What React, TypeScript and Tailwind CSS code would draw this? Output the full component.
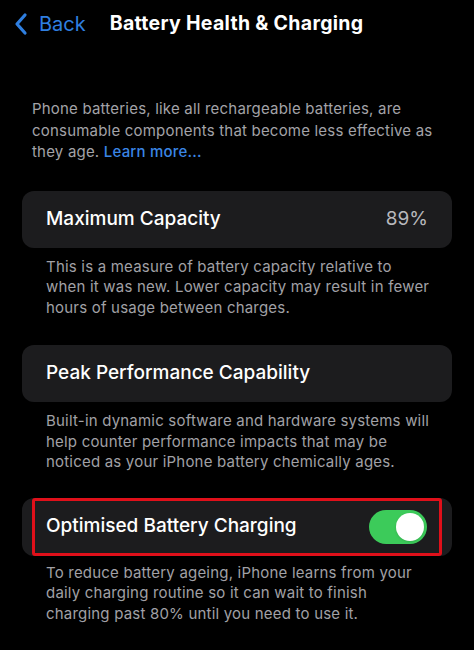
import React from "react";

const font = { fontFamily: "Inter, 'Noto Sans', sans-serif" };

const Toggle = () => (
  <div className="w-[58px] h-[34px] rounded-full bg-[#3ccb5a] p-[3px] flex justify-end">
    <div className="w-[28px] h-[28px] rounded-full bg-white shadow" />
  </div>
);

const Note = ({ children, top = "pt-[9px]" }: { children: React.ReactNode; top?: string }) => (
  <p className={`pl-[46px] pr-[20px] ${top} text-[15px] leading-[20.5px] text-[#a1a1a6] tracking-[0.2px]`}>
    {children}
  </p>
);

export default function App() {
  return (
    <div className="w-[474px] h-[650px] bg-black text-white overflow-hidden" style={font}>
      <div className="flex items-center h-[48px] pl-[12px]">
        <svg width="18" height="24" viewBox="0 0 18 24" className="mr-[9px]">
          <path d="M13 3 L5 12 L13 21" fill="none" stroke="#2f7fe0" strokeWidth="3.2" strokeLinecap="round" strokeLinejoin="round" />
        </svg>
        <span className="text-[20px] text-[#2f7fe0]">Back</span>
        <span className="ml-[24px] text-[19.5px] font-bold tracking-[0.3px]">Battery Health &amp; Charging</span>
      </div>

      <p className="mt-[50px] px-[32px] pr-[30px] text-[15px] leading-[21.5px] text-[#a3a3a8] tracking-[0.2px]">
        Phone batteries, like all rechargeable batteries, are consumable components that become less effective as
        they age. <span className="text-[#3a86e6] font-medium">Learn more...</span>
      </p>

      <div className="mx-[22px] mt-[28px] h-[57px] rounded-[12px] bg-[#1c1c1e] flex items-center justify-between px-[24px]">
        <span className="text-[19px] font-medium">Maximum Capacity</span>
        <span className="text-[19px] text-[#b8b8bc]">89%</span>
      </div>
      <Note>
        This is a measure of battery capacity relative to
        <br />
        when it was new. Lower capacity may result in fewer
        <br />
        hours of usage between charges.
      </Note>

      <div className="mx-[22px] mt-[27px] h-[57px] rounded-[12px] bg-[#1c1c1e] flex items-center px-[24px]">
        <span className="text-[19px] font-medium">Peak Performance Capability</span>
      </div>
      <Note>
        Built-in dynamic software and hardware systems will
        <br />
        help counter performance impacts that may be
        <br />
        noticed as your iPhone battery chemically ages.
      </Note>

      <div className="mx-[22px] mt-[25px] h-[58px] rounded-[12px] bg-[#1c1c1e] flex">
        <div className="mx-[10px] flex-1 border-[3px] border-[#e0101a] rounded-[3px] flex items-center justify-between pl-[11px] pr-[12px]">
          <span className="text-[19px] font-medium">Optimised Battery Charging</span>
          <Toggle />
        </div>
      </div>
      <Note top="pt-[7px]">
        To reduce battery ageing, iPhone learns from your
        <br />
        daily charging routine so it can wait to finish
        <br />
        charging past 80% until you need to use it.
      </Note>
    </div>
  );
}
